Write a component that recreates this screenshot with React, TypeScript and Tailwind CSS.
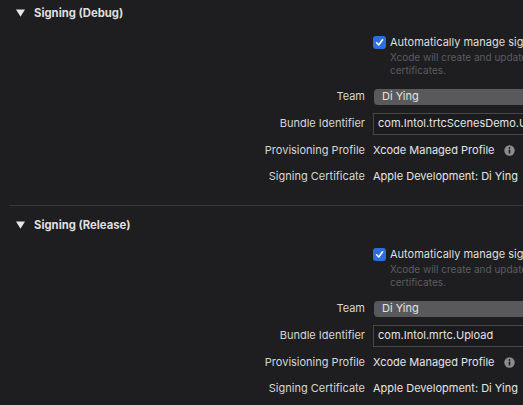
import React from "react";

const font = { fontFamily: "Inter, 'Noto Sans', sans-serif" };

function Info() {
  return (
    <svg width="11" height="11" viewBox="0 0 11 11" className="ml-[10px]">
      <circle cx="5.5" cy="5.5" r="5.2" fill="#8c8c8c" />
      <rect x="4.7" y="4.6" width="1.6" height="4" rx="0.6" fill="#1e1e20" />
      <circle cx="5.5" cy="3" r="0.9" fill="#1e1e20" />
    </svg>
  );
}

function Section({ title, bundle }: { title: string; bundle: string }) {
  return (
    <div className="flex flex-col">
      <div className="h-[26px] flex items-center pl-[16px]">
        <svg width="9" height="8" viewBox="0 0 9 8" className="mr-[9px]">
          <path d="M0 0.5 H9 L4.5 7.8 Z" fill="#e6e6e6" />
        </svg>
        <span className="text-[11.3px] font-bold text-[#dedede]">{title}</span>
      </div>
      <div className="grid grid-cols-[373px_1fr] mt-[10px]">
        <div />
        <div className="flex flex-col">
          <div className="flex items-center h-[13px]">
            <div className="w-[13px] h-[13px] rounded-[3px] bg-[#2d6ee0] flex items-center justify-center mr-[4px]">
              <svg width="9" height="9" viewBox="0 0 9 9">
                <path d="M1.6 4.8 L3.7 7 L7.6 1.8" stroke="#fff" strokeWidth="1.6" fill="none" strokeLinecap="round" strokeLinejoin="round" />
              </svg>
            </div>
            <span className="text-[11px] text-[#dedede] whitespace-nowrap">Automatically manage signing</span>
          </div>
          <div className="pl-[17px] text-[10px] leading-[13px] text-[#5c5c5e] mt-[2px] whitespace-nowrap">
            Xcode will create and update profiles, app IDs, and
            <br />
            certificates.
          </div>
        </div>
      </div>
      <div className="grid grid-cols-[373px_1fr] text-[11px] mt-[6px]">
        <div className="h-[27px] flex items-center justify-end pr-[8px] text-[#d6d6d6]">Team</div>
        <div className="h-[27px] flex items-center">
          <div className="h-[16px] w-[220px] ml-[1px] rounded-[4px] bg-[#59595b] flex items-center pl-[8px] text-[#e4e4e4]">Di Ying</div>
        </div>
        <div className="h-[27px] flex items-center justify-end pr-[8px] text-[#d6d6d6]">Bundle Identifier</div>
        <div className="h-[27px] flex items-center">
          <div className="h-[22px] w-[220px] border border-[#48484a] bg-[#1b1b1d] flex items-center pl-[4px] text-[#e4e4e4] whitespace-nowrap">{bundle}</div>
        </div>
        <div className="h-[26px] flex items-center justify-end pr-[8px] text-[#d6d6d6]">Provisioning Profile</div>
        <div className="h-[26px] flex items-center text-[#e4e4e4]">
          Xcode Managed Profile
          <Info />
        </div>
        <div className="h-[27px] flex items-center justify-end pr-[8px] text-[#d6d6d6]">Signing Certificate</div>
        <div className="h-[27px] flex items-center text-[#e4e4e4] whitespace-nowrap">Apple Development: Di Ying</div>
      </div>
    </div>
  );
}

export default function App() {
  return (
    <div className="w-[523px] h-[405px] overflow-hidden bg-[#1e1e20]" style={font}>
      <Section title="Signing (Debug)" bundle="com.Intol.trtcScenesDemo.Upload" />
      <div className="h-[15px]" />
      <div className="ml-[9px] h-[1px] bg-[#38383a]" />
      <div className="h-[6px]" />
      <Section title="Signing (Release)" bundle="com.Intol.mrtc.Upload" />
    </div>
  );
}
